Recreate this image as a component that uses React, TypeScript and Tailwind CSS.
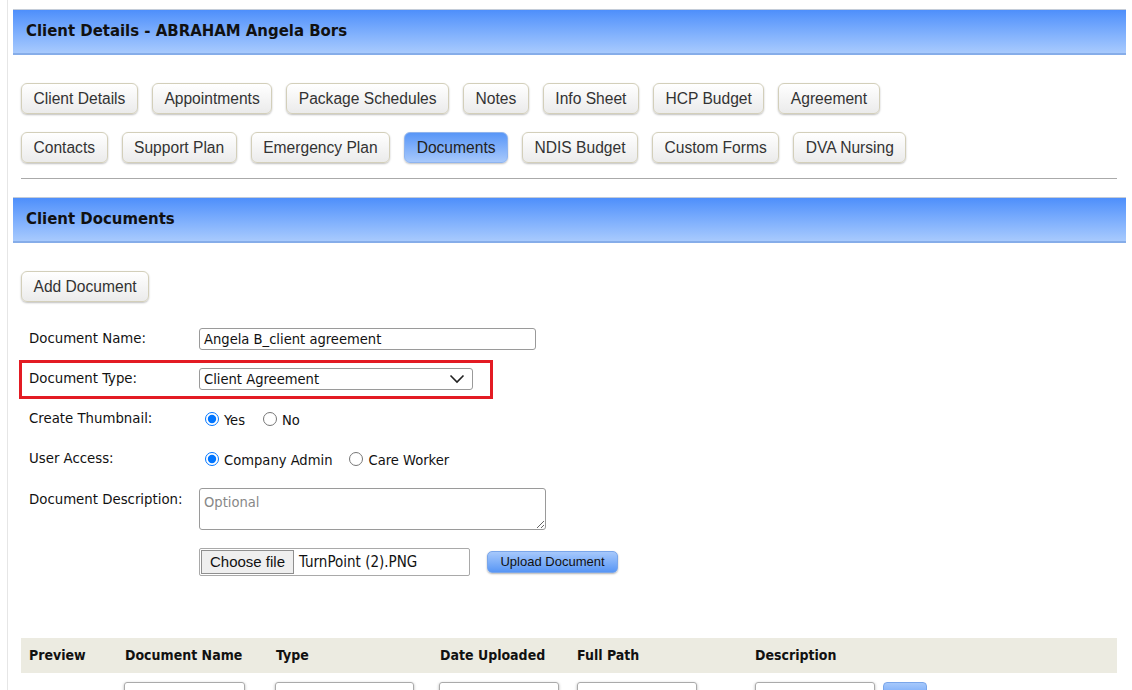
import React from 'react'

const tahoma = { fontFamily: '"DejaVu Sans Condensed", "DejaVu Sans", sans-serif' }
const arial = { fontFamily: '"Liberation Sans", Arial, sans-serif' }

const rowOne = ['Client Details', 'Appointments', 'Package Schedules', 'Notes', 'Info Sheet', 'HCP Budget', 'Agreement']
const rowTwo = ['Contacts', 'Support Plan', 'Emergency Plan', 'Documents', 'NDIS Budget', 'Custom Forms', 'DVA Nursing']

function TabButton({ label, active = false }: { label: string; active?: boolean }) {
  return (
    <button
      style={arial}
      className={
        active
          ? 'h-[31px] rounded-[6px] border border-[#8fb4ee] bg-gradient-to-b from-[#5896f7] to-[#a7c8fb] px-[11.5px] text-[15.6px] text-[#222] shadow-[0_1px_2px_rgba(0,0,0,0.25)]'
          : 'h-[31px] rounded-[6px] border border-[#d3cfba] bg-gradient-to-b from-white to-[#ebebeb] px-[11.5px] text-[15.6px] text-[#333] shadow-[0_1px_2px_rgba(0,0,0,0.25)]'
      }
    >
      {label}
    </button>
  )
}

function SectionHeader({ title }: { title: string }) {
  return (
    <div
      style={tahoma}
      className="flex h-[46px] items-center border-t border-[#c4ccd8] border-b-2 border-b-[#86ade9] bg-gradient-to-b from-[#4e8ffb] to-[#a8cafd] pl-[13px] text-[16.6px] font-bold text-[#111]"
    >
      {title}
    </div>
  )
}

function FormRow({ label, children, className = 'h-[40px] items-center' }: { label: string; children: React.ReactNode; className?: string }) {
  return (
    <div className={`flex ${className}`}>
      <div style={tahoma} className="w-[170px] shrink-0 pb-[2px] text-[14.8px] text-[#111]">
        {label}
      </div>
      {children}
    </div>
  )
}

function Radio({ label, checked = false }: { label: string; checked?: boolean }) {
  return (
    <label style={tahoma} className="flex items-center gap-[5px] text-[14.6px] text-[#111]">
      <input type="radio" defaultChecked={checked} className="m-0 h-[14px] w-[14px]" />
      <span className="pt-[2px]">{label}</span>
    </label>
  )
}

export default function App() {
  return (
    <div className="min-h-screen bg-white">
      <div className="ml-[7px] min-h-[690px] border-l border-[#e6e6e6] pl-[5px] pr-[6px] pt-[9px]">
        <SectionHeader title="Client Details - ABRAHAM Angela Bors" />

        <div className="px-[8px] pr-[9px]">
          <div className="mt-[28px] flex gap-[14px]">
            {rowOne.map((t) => (
              <TabButton key={t} label={t} />
            ))}
          </div>
          <div className="mt-[18px] flex gap-[14px]">
            {rowTwo.map((t) => (
              <TabButton key={t} label={t} active={t === 'Documents'} />
            ))}
          </div>
          <div className="mt-[15px] h-px bg-[#aaaaaa]" />
        </div>

        <div className="mt-[18px]">
          <SectionHeader title="Client Documents" />
        </div>

        <div className="px-[8px] pr-[9px]">
          <div className="mt-[28px]">
            <TabButton label="Add Document" />
          </div>

          <div className="mt-[17px] pl-[8px]">
            <FormRow label="Document Name:">
              <div
                style={tahoma}
                className="flex h-[22px] w-[337px] items-center rounded-[3px] border border-[#9a9a9a] pl-[4px] text-[14.6px] text-[#111]"
              >
                Angela B_client agreement
              </div>
            </FormRow>

            <div className="relative">
              <FormRow label="Document Type:">
                <div
                  style={tahoma}
                  className="flex h-[22px] w-[274px] items-center justify-between rounded-[3px] border border-[#9a9a9a] pl-[4px] pr-[7px] text-[14.6px] text-[#111]"
                >
                  <span>Client Agreement</span>
                  <svg width="16" height="10" viewBox="0 0 16 10" fill="none">
                    <path d="M1.5 1.5 L8 8 L14.5 1.5" stroke="#222" strokeWidth="1.6" />
                  </svg>
                </div>
              </FormRow>
              <div className="pointer-events-none absolute left-[-10px] top-[1px] h-[39px] w-[474px] border-[3px] border-[#e31b23]" />
            </div>

            <FormRow label="Create Thumbnail:">
              <div className="flex gap-[18px] pl-[6px]">
                <Radio label="Yes" checked />
                <Radio label="No" />
              </div>
            </FormRow>

            <FormRow label="User Access:">
              <div className="flex gap-[17px] pl-[6px]">
                <Radio label="Company Admin" checked />
                <Radio label="Care Worker" />
              </div>
            </FormRow>

            <FormRow label="Document Description:" className="mt-[9px] items-start">
              <textarea
                readOnly
                placeholder="Optional"
                style={tahoma}
                className="h-[42px] w-[347px] rounded-[3px] border border-[#9a9a9a] px-[4px] pt-[2px] text-[14.6px] text-[#111] placeholder:text-[#888]"
              />
            </FormRow>

            <div className="mt-[18px] flex items-center pl-[170px]">
              <div className="flex h-[28px] w-[271px] items-center rounded-[2px] border border-[#a9a9a9]">
                <div
                  style={arial}
                  className="ml-[1px] flex h-[24px] items-center border border-[#8f8f8f] bg-[#efefef] px-[8px] text-[15px] text-[#111]"
                >
                  Choose file
                </div>
                <span style={tahoma} className="pl-[5px] text-[15px] text-[#111]">
                  TurnPoint (2).PNG
                </span>
              </div>
              <button
                style={arial}
                className="ml-[17px] h-[22px] w-[131px] rounded-[5px] border border-[#7aa6ea] bg-gradient-to-b from-[#a6c8fb] to-[#5896f5] text-[13px] text-[#111] shadow-[0_1px_2px_rgba(0,0,0,0.3)]"
              >
                Upload Document
              </button>
            </div>
          </div>

          <div className="mt-[62px]">
            <div
              style={tahoma}
              className="flex h-[35px] items-center bg-[#ecebe1] text-[14px] font-bold text-[#111]"
            >
              <div className="w-[104px] pl-[8px]">Preview</div>
              <div className="w-[151px]">Document Name</div>
              <div className="w-[164px]">Type</div>
              <div className="w-[137px]">Date Uploaded</div>
              <div className="w-[178px]">Full Path</div>
              <div>Description</div>
            </div>
            <div className="flex pt-[9px]">
              <div className="w-[103px]" />
              <div className="w-[151px]">
                <div className="h-[22px] w-[121px] rounded-[3px] border border-[#aaa] shadow-[0_1px_3px_rgba(0,0,0,0.3)]" />
              </div>
              <div className="w-[164px]">
                <div className="h-[22px] w-[139px] rounded-[3px] border border-[#aaa] shadow-[0_1px_3px_rgba(0,0,0,0.3)]" />
              </div>
              <div className="w-[138px]">
                <div className="h-[22px] w-[120px] rounded-[3px] border border-[#aaa] shadow-[0_1px_3px_rgba(0,0,0,0.3)]" />
              </div>
              <div className="w-[178px]">
                <div className="h-[22px] w-[120px] rounded-[3px] border border-[#aaa] shadow-[0_1px_3px_rgba(0,0,0,0.3)]" />
              </div>
              <div className="flex gap-[8px]">
                <div className="h-[22px] w-[120px] rounded-[3px] border border-[#aaa] shadow-[0_1px_3px_rgba(0,0,0,0.3)]" />
                <div className="h-[22px] w-[44px] rounded-[4px] border border-[#7aa6ea] bg-gradient-to-b from-[#a6c8fb] to-[#5896f5]" />
              </div>
            </div>
          </div>
        </div>
      </div>
    </div>
  )
}
